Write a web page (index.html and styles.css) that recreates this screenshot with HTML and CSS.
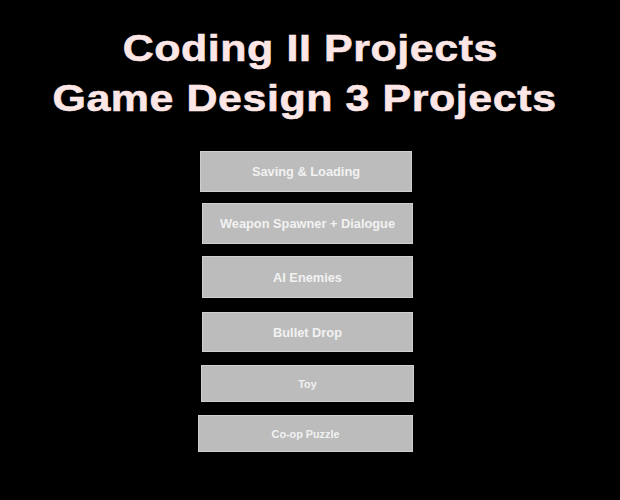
FILE: index.html
```html
<!DOCTYPE html>
<html lang="en">
<head>
<meta charset="utf-8">
<title>Projects</title>
<link rel="stylesheet" href="styles.css">
</head>
<body>
<main class="page">
  <h1 class="title">
    <span class="title-line">Coding II Projects</span>
    <span class="title-line title-line-second">Game Design 3 Projects</span>
  </h1>
  <nav class="menu">
    <a class="menu-btn btn-save">Saving &amp; Loading</a>
    <a class="menu-btn btn-weapon">Weapon Spawner + Dialogue</a>
    <a class="menu-btn btn-ai">AI Enemies</a>
    <a class="menu-btn btn-bullet">Bullet Drop</a>
    <a class="menu-btn btn-toy">Toy</a>
    <a class="menu-btn btn-coop">Co-op Puzzle</a>
  </nav>
</main>
</body>
</html>
```
FILE: styles.css
```css
html, body {
  margin: 0;
  padding: 0;
  background: #000;
}

.page {
  width: 620px;
  height: 500px;
  display: flex;
  flex-direction: column;
  align-items: center;
}

.title {
  margin: 24px 0 0;
  display: flex;
  flex-direction: column;
  align-items: center;
  font-family: "Liberation Sans", Arial, sans-serif;
  font-weight: 700;
  font-size: 37px;
  line-height: 50px;
  color: #fde6e6;
  letter-spacing: 0.5px;
  -webkit-text-stroke: 0.6px #fde6e6;
  transform: scaleX(1.16);
}

.title-line-second {
  padding-right: 10px;
}

.menu {
  margin-top: 27px;
  display: flex;
  flex-direction: column;
  width: 620px;
}

.menu-btn {
  box-sizing: border-box;
  display: flex;
  align-items: center;
  justify-content: center;
  width: 212px;
  height: 41px;
  margin-left: 200px;
  background: #bcbcbc;
  border: 1px solid #cfcfcf;
  color: #f2f2f2;
  font-family: "Liberation Sans", Arial, sans-serif;
  font-weight: 700;
  font-size: 12.8px;
  text-decoration: none;
}

.btn-save { margin-top: 0; }
.btn-weapon { margin-top: 11px; margin-left: 202px; width: 211px; }
.btn-ai { margin-top: 12px; margin-left: 202px; width: 211px; height: 42px; }
.btn-bullet { margin-top: 14px; margin-left: 202px; width: 211px; height: 40px; }
.btn-toy { margin-top: 13px; margin-left: 201px; width: 213px; height: 37px; font-size: 10.8px; }
.btn-coop { margin-top: 13px; margin-left: 198px; width: 215px; height: 37px; font-size: 10.8px; }
```
